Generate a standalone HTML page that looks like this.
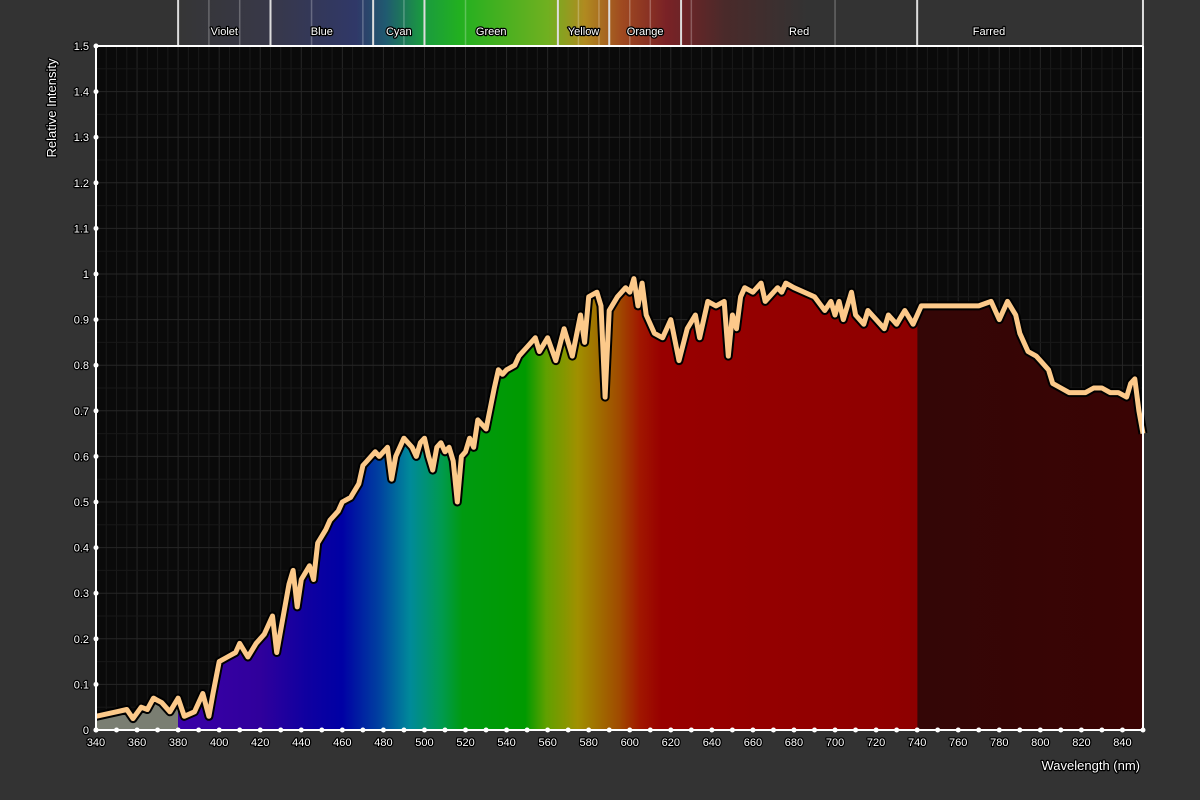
<!DOCTYPE html>
<html><head><meta charset="utf-8"><style>
html,body{margin:0;padding:0;background:#333;}
svg{display:block;font-family:"Liberation Sans",sans-serif;}
.t{fill:#fff;stroke:#000;stroke-width:2.5px;paint-order:stroke;stroke-linejoin:round;}
</style></head><body>
<svg width="1200" height="800" viewBox="0 0 1200 800">
<defs>
<linearGradient id="spec" x1="96" x2="1143" y1="0" y2="0" gradientUnits="userSpaceOnUse">
<stop offset="0" stop-color="#7a7e72"/>
<stop offset="0.0784" stop-color="#7a7e72"/>
<stop offset="0.0785" stop-color="#3a00a8"/>
<stop offset="0.157" stop-color="#30009c"/>
<stop offset="0.2" stop-color="#1000a0"/>
<stop offset="0.235" stop-color="#0000a4"/>
<stop offset="0.27" stop-color="#0040a0"/>
<stop offset="0.3" stop-color="#008a9a"/>
<stop offset="0.33" stop-color="#009a50"/>
<stop offset="0.35" stop-color="#009a10"/>
<stop offset="0.41" stop-color="#009a00"/>
<stop offset="0.43" stop-color="#60a000"/>
<stop offset="0.46" stop-color="#a09000"/>
<stop offset="0.5" stop-color="#a04a00"/>
<stop offset="0.52" stop-color="#a01600"/>
<stop offset="0.54" stop-color="#980000"/>
<stop offset="0.784" stop-color="#8e0000"/>
<stop offset="0.785" stop-color="#340606"/>
<stop offset="1" stop-color="#3a0404"/>
</linearGradient>
<linearGradient id="band" x1="179" x2="917" y1="0" y2="0" gradientUnits="userSpaceOnUse">
<stop offset="0" stop-color="#363636"/>
<stop offset="0.12" stop-color="#383848"/>
<stop offset="0.24" stop-color="#303868"/>
<stop offset="0.28" stop-color="#205a70"/>
<stop offset="0.33" stop-color="#1a9a40"/>
<stop offset="0.38" stop-color="#22b020"/>
<stop offset="0.5" stop-color="#70b020"/>
<stop offset="0.55" stop-color="#b08a20"/>
<stop offset="0.6" stop-color="#a04a20"/>
<stop offset="0.66" stop-color="#7a2226"/>
<stop offset="0.74" stop-color="#4a2a2a"/>
<stop offset="0.85" stop-color="#333"/>
<stop offset="1" stop-color="#333"/>
</linearGradient>
</defs>
<rect x="179" y="0" width="738" height="46" fill="url(#band)"/>
<rect x="96" y="46" width="1047" height="684" fill="#0a0a0a"/>
<g id="grid"></g>
<g id="fillg"></g>
<g id="bandlines"></g>
<g id="axes"></g>
</svg>
<script>
var ns="http://www.w3.org/2000/svg";
function X(n){return 96+(n-340)*2.0529;}function Y(v){return 730-v*456;}
function el(p,t,a,txt){var e=document.createElementNS(ns,t);for(var k in a)e.setAttribute(k,a[k]);if(txt!=null)e.textContent=txt;p.appendChild(e);return e;}
var g=document.getElementById('grid');
for(var n=340;n<=850;n+=5)el(g,'line',{x1:X(n),x2:X(n),y1:46,y2:730,stroke:n%20==0?'#262626':'#1a1a1a','stroke-width':1});
for(var v=0;v<=15;v++)el(g,'line',{x1:96,x2:1143,y1:Y(v/10),y2:Y(v/10),stroke:'#262626','stroke-width':1});
for(var v=0;v<15;v++)el(g,'line',{x1:96,x2:1143,y1:Y(v/10+0.05),y2:Y(v/10+0.05),stroke:'#181818','stroke-width':1});
var d=[340,.03,350,.04,355,.045,358,.025,362,.05,365,.045,368,.07,370,.065,372,.06,376,.04,380,.07,383,.03,388,.04,392,.08,395,.03,397,.08,400,.15,404,.16,408,.17,410,.19,414,.16,418,.19,422,.21,426,.25,428,.17,430,.22,434,.32,436,.35,438,.27,440,.33,444,.36,446,.33,448,.41,452,.44,454,.46,458,.48,460,.5,464,.51,468,.54,470,.58,472,.59,476,.61,478,.6,482,.62,484,.55,486,.6,490,.64,494,.62,496,.6,498,.63,500,.64,502,.6,504,.57,506,.62,508,.63,510,.61,512,.62,514,.59,516,.5,518,.6,520,.61,522,.64,524,.62,526,.68,530,.66,534,.75,536,.79,538,.78,540,.79,544,.8,546,.82,550,.84,554,.86,556,.83,560,.86,564,.81,568,.88,572,.82,576,.91,578,.85,580,.95,584,.96,586,.93,588,.73,590,.92,594,.95,598,.97,600,.96,602,.99,604,.93,606,.98,608,.91,612,.87,616,.86,620,.9,624,.81,628,.88,632,.91,634,.86,638,.94,642,.93,646,.94,648,.82,650,.91,652,.88,654,.95,656,.97,660,.96,664,.98,666,.94,670,.96,672,.97,674,.96,676,.98,680,.97,690,.95,695,.92,698,.94,700,.91,702,.94,704,.9,708,.96,710,.91,714,.89,716,.92,720,.9,724,.88,726,.91,730,.89,734,.92,738,.89,742,.93,746,.93,760,.93,770,.93,776,.94,780,.9,784,.94,788,.91,790,.87,794,.83,798,.82,800,.81,804,.79,806,.76,810,.75,814,.74,818,.74,822,.74,826,.75,830,.75,834,.74,838,.74,842,.73,844,.76,846,.77,848,.7,850,.65];
var pts=[];for(var i=0;i<d.length;i+=2)pts.push(X(d[i]).toFixed(1)+','+Y(d[i+1]).toFixed(1));
var line='M'+pts.join(' L');
var fg=document.getElementById('fillg');
el(fg,'path',{d:line+' L1143,730 L96,730 Z',fill:'url(#spec)'});
el(fg,'path',{d:line,fill:'none',stroke:'#000','stroke-width':9,'stroke-linejoin':'round'});
el(fg,'path',{d:line,fill:'none',stroke:'#fcc98a','stroke-width':5,'stroke-linejoin':'round'});
var bl=document.getElementById('bandlines');
[395,410,445,470,490,520,575,585,600,610,630,700].forEach(function(n){el(bl,'line',{x1:X(n),x2:X(n),y1:0,y2:46,stroke:'rgba(255,255,255,0.25)','stroke-width':1.5});});
[380,425,475,500,565,590,625,740,850].forEach(function(n){el(bl,'line',{x1:X(n),x2:X(n),y1:0,y2:46,stroke:'#ddd','stroke-width':2});});
[['Violet',402.5],['Blue',450],['Cyan',487.5],['Green',532.5],['Yellow',577.5],['Orange',607.5],['Red',682.5],['Farred',775]].forEach(function(b){el(bl,'text',{x:X(b[1]),y:35,'text-anchor':'middle','font-size':11,class:'t'},b[0]);});
var ax=document.getElementById('axes');
el(ax,'line',{x1:96,x2:1143,y1:46,y2:46,stroke:'#fff','stroke-width':2});
el(ax,'line',{x1:96,x2:96,y1:46,y2:731,stroke:'#fff','stroke-width':2});
el(ax,'line',{x1:96,x2:1143,y1:730,y2:730,stroke:'#fff','stroke-width':2});
el(ax,'line',{x1:1143,x2:1143,y1:46,y2:731,stroke:'#fff','stroke-width':2});
for(var n=340;n<=850;n+=10){el(ax,'circle',{cx:X(n),cy:730,r:2.5,fill:'#fff'});if(n%20==0)el(ax,'text',{x:X(n),y:746,'text-anchor':'middle','font-size':11,class:'t'},n);}
for(var v=0;v<=15;v++){el(ax,'circle',{cx:96,cy:Y(v/10),r:2.5,fill:'#fff'});var s=v==0?'0':v==10?'1':(v/10).toString();el(ax,'text',{x:89,y:Y(v/10)+4,'text-anchor':'end','font-size':11,class:'t'},s);}
el(ax,'text',{x:56,y:108,'text-anchor':'middle','font-size':13,class:'t',transform:'rotate(-90 56 108)'},'Relative Intensity');
el(ax,'text',{x:1140,y:770,'text-anchor':'end','font-size':13,class:'t'},'Wavelength (nm)');
</script>
</body></html>
